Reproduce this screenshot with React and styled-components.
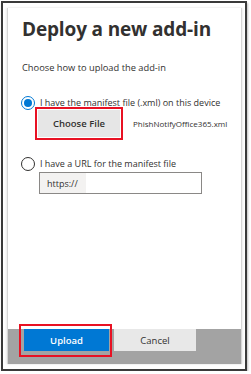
import React from "react";
import styled, { createGlobalStyle } from "styled-components";

const Global = createGlobalStyle`
  html, body { margin: 0; padding: 0; background: #ffffff; }
  body { font-family: "Open Sans", "Noto Sans", sans-serif; color: #323130; }
`;

const Frame = styled.div`
  box-sizing: border-box;
  margin: 1px 0 0 1px;
  width: 246px;
  height: 370px;
  border: 2px solid #3a3a3a;
  box-shadow: 1px 2px 2px rgba(0, 0, 0, 0.25);
  padding: 5px 3px 5px 4px;
  background: #fff;
`;

const Panel = styled.div`
  box-sizing: border-box;
  height: 100%;
  display: flex;
  flex-direction: column;
  background: #fff;
  border-left: 1px solid #d6d6d6;
  border-right: 1px solid #d6d6d6;
  box-shadow: -1px 0 2px rgba(0, 0, 0, 0.08), 1px 0 2px rgba(0, 0, 0, 0.08);
`;

const Body = styled.div`
  flex: 1;
  padding: 8px 0 0 14px;
`;

const Title = styled.h1`
  margin: 0;
  font-size: 19px;
  font-weight: 700;
  line-height: 26px;
  letter-spacing: -0.15px;
  color: #323130;
`;

const Subtitle = styled.p`
  margin: 20px 0 0 0;
  font-size: 9.3px;
  line-height: 12px;
  color: #323130;
`;

const Option = styled.div`
  margin-top: ${(p) => p.$top}px;
  display: flex;
  flex-direction: column;
  gap: ${(p) => p.$gap}px;
`;

const RadioRow = styled.label`
  display: flex;
  align-items: center;
  gap: 5px;
  margin-left: -1px;
  font-size: 9px;
  line-height: 14px;
  color: #323130;
`;

const Radio = styled.span`
  box-sizing: border-box;
  width: 14px;
  height: 14px;
  border-radius: 50%;
  border: 1px solid ${(p) => (p.$checked ? "#0078d4" : "#323130")};
  display: flex;
  align-items: center;
  justify-content: center;
  flex-shrink: 0;
  &::after {
    content: "";
    width: 8px;
    height: 8px;
    border-radius: 50%;
    background: ${(p) => (p.$checked ? "#0078d4" : "transparent")};
  }
`;

const FileRow = styled.div`
  display: flex;
  align-items: center;
  gap: 13px;
  padding-left: 16px;
`;

const Highlighted = styled.div`
  position: relative;
  display: flex;
  &::after {
    content: "";
    position: absolute;
    top: ${(p) => p.$t}px;
    right: ${(p) => p.$r}px;
    bottom: ${(p) => p.$b}px;
    left: ${(p) => p.$l}px;
    border: 2px solid #e81123;
    pointer-events: none;
  }
`;

const GreyButton = styled.button`
  box-sizing: border-box;
  width: 82px;
  height: 27px;
  border: none;
  background: #e6e6e6;
  font-family: inherit;
  font-size: 9.5px;
  font-weight: 600;
  color: #323130;
  padding: 0;
`;

const FileName = styled.span`
  font-size: 8px;
  color: #323130;
`;

const UrlField = styled.div`
  box-sizing: border-box;
  margin-left: 17px;
  width: 163px;
  height: 22px;
  border: 1px solid #8a8886;
  display: flex;
`;

const UrlPrefix = styled.span`
  width: 46px;
  background: #f3f2f1;
  display: flex;
  align-items: center;
  padding-left: 7px;
  box-sizing: border-box;
  font-size: 9px;
  color: #323130;
`;

const UrlInput = styled.span`
  flex: 1;
`;

const Footer = styled.div`
  height: 35px;
  background: #a3a3a3;
  display: flex;
  align-items: flex-start;
  gap: 5px;
  padding-left: 16px;
`;

const FooterButton = styled.button`
  box-sizing: border-box;
  width: ${(p) => p.$w}px;
  height: 22px;
  border: none;
  padding: 0;
  font-family: inherit;
  font-size: 9.5px;
  font-weight: ${(p) => (p.$primary ? 600 : 400)};
  background: ${(p) => (p.$primary ? "#0078d4" : "#e8e8e8")};
  color: ${(p) => (p.$primary ? "#ffffff" : "#323130")};
`;

export default function App() {
  return (
    <>
      <Global />
      <Frame>
        <Panel>
          <Body>
            <Title>Deploy a new add-in</Title>
            <Subtitle>Choose how to upload the add-in</Subtitle>
            <Option $top={22} $gap={0}>
              <RadioRow>
                <Radio $checked />
                I have the manifest file (.xml) on this device
              </RadioRow>
              <FileRow>
                <Highlighted $t={-3} $r={-3} $b={-3} $l={-3}>
                  <GreyButton>Choose File</GreyButton>
                </Highlighted>
                <FileName>PhishNotifyOffice365.xml</FileName>
              </FileRow>
            </Option>
            <Option $top={20} $gap={1}>
              <RadioRow>
                <Radio />
                I have a URL for the manifest file
              </RadioRow>
              <UrlField>
                <UrlPrefix>https://</UrlPrefix>
                <UrlInput />
              </UrlField>
            </Option>
          </Body>
          <Footer>
            <Highlighted $t={-5} $r={-3} $b={-6} $l={-5}>
              <FooterButton $primary $w={85}>Upload</FooterButton>
            </Highlighted>
            <FooterButton $w={82}>Cancel</FooterButton>
          </Footer>
        </Panel>
      </Frame>
    </>
  );
}
